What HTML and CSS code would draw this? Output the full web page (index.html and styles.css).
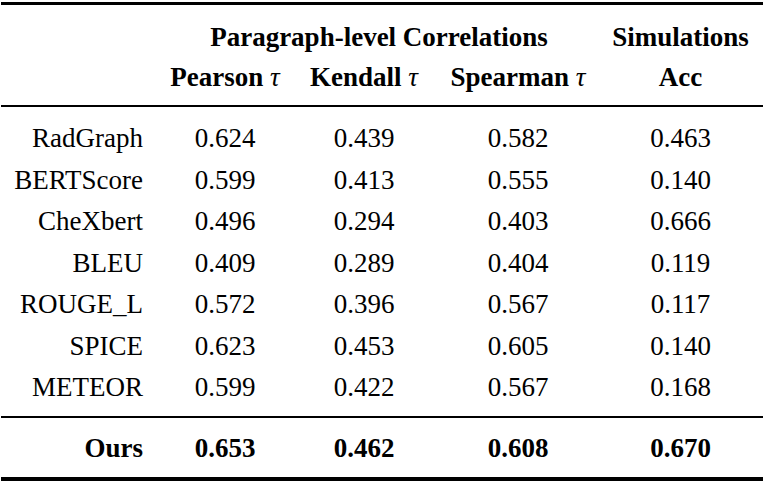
FILE: index.html
```html
<!DOCTYPE html>
<html>
<head>
<meta charset="utf-8">
<link rel="stylesheet" href="styles.css">
</head>
<body>
<table class="results">
  <colgroup>
    <col class="c-label">
    <col class="c-pearson">
    <col class="c-kendall">
    <col class="c-spearman">
    <col class="c-sim">
  </colgroup>
  <thead>
    <tr class="head1">
      <th></th>
      <th colspan="3">Paragraph-level Correlations</th>
      <th>Simulations</th>
    </tr>
    <tr class="head2">
      <th></th>
      <th>Pearson <span class="tau">τ</span></th>
      <th>Kendall <span class="tau">τ</span></th>
      <th>Spearman <span class="tau">τ</span></th>
      <th>Acc</th>
    </tr>
  </thead>
  <tbody class="metrics">
    <tr class="first"><td class="label">RadGraph</td><td>0.624</td><td>0.439</td><td>0.582</td><td>0.463</td></tr>
    <tr><td class="label">BERTScore</td><td>0.599</td><td>0.413</td><td>0.555</td><td>0.140</td></tr>
    <tr><td class="label">CheXbert</td><td>0.496</td><td>0.294</td><td>0.403</td><td>0.666</td></tr>
    <tr><td class="label">BLEU</td><td>0.409</td><td>0.289</td><td>0.404</td><td>0.119</td></tr>
    <tr><td class="label">ROUGE_L</td><td>0.572</td><td>0.396</td><td>0.567</td><td>0.117</td></tr>
    <tr><td class="label">SPICE</td><td>0.623</td><td>0.453</td><td>0.605</td><td>0.140</td></tr>
    <tr class="last"><td class="label">METEOR</td><td>0.599</td><td>0.422</td><td>0.567</td><td>0.168</td></tr>
  </tbody>
  <tbody class="ours">
    <tr><td class="label">Ours</td><td>0.653</td><td>0.462</td><td>0.608</td><td>0.670</td></tr>
  </tbody>
</table>
</body>
</html>
```

FILE: styles.css
```css
html, body {
  margin: 0;
  padding: 0;
  background: #ffffff;
}

body {
  padding: 2px 0 0 1px;
  font-family: "Liberation Serif", "Times New Roman", serif;
  font-size: 27px;
  color: #000000;
}

.results {
  border-collapse: collapse;
  table-layout: fixed;
  width: 762px;
  border-top: 3px solid #000;
  border-bottom: 4px solid #000;
}

.c-label { width: 159px; }
.c-pearson { width: 130px; }
.c-kendall { width: 148px; }
.c-spearman { width: 160px; }
.c-sim { width: 165px; }

th, td {
  padding: 0;
  text-align: center;
  line-height: 40px;
  white-space: nowrap;
}

th {
  font-weight: bold;
}

.tau {
  font-style: italic;
  font-weight: normal;
}

.head1 th {
  padding-top: 12px;
}

.head2 th {
  padding-bottom: 8px;
  border-bottom: 2px solid #000;
}

.metrics td {
  line-height: 41.5px;
}

.metrics .first td {
  padding-top: 11px;
}

.metrics .last td {
  padding-bottom: 7px;
  border-bottom: 2px solid #000;
}

td.label {
  text-align: right;
  padding-right: 17px;
}

.ours td {
  font-weight: bold;
  line-height: 41.5px;
  padding-top: 10px;
  padding-bottom: 8px;
}
```
